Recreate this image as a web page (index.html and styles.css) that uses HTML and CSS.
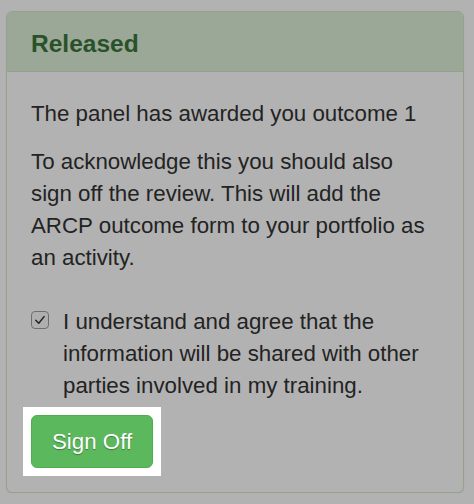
FILE: index.html
```html
<!DOCTYPE html>
<html lang="en">
<head>
<meta charset="utf-8">
<title>Released</title>
<link rel="stylesheet" href="styles.css">
</head>
<body>
<div class="panel">
  <div class="panel-heading">
    <h3 class="panel-title">Released</h3>
  </div>
  <div class="panel-body">
    <p class="para">The panel has awarded you outcome 1</p>
    <p class="para">To acknowledge this you should also sign off the review. This will add the ARCP outcome form to your portfolio as an activity.</p>
    <label class="checkbox">
      <span class="box"><svg class="tick" viewBox="0 0 18 18" width="16" height="16"><path d="M4.2 9.2 L7.6 12.6 L13.6 5.2" fill="none" stroke="#333" stroke-width="1.7" stroke-linecap="round" stroke-linejoin="round"/></svg></span>
      <span class="label-text">I understand and agree that the information will be shared with other parties involved in my training.</span>
    </label>
    <div class="actions">
      <div class="highlight">
        <button class="btn-success" type="button">Sign Off</button>
      </div>
    </div>
  </div>
</div>
<div class="overlay"></div>
</body>
</html>
```

FILE: styles.css
```css
html, body {
  margin: 0;
  padding: 0;
  background: #ffffff;
}

body {
  font-family: "Liberation Sans", Arial, Helvetica, sans-serif;
  color: #333333;
  font-size: 22.3px;
  line-height: 32px;
}

.panel {
  box-sizing: border-box;
  width: 458px;
  margin: 11px 0 0 6px;
  border: 1px solid #d6e9c6;
  border-radius: 6px;
  background: #ffffff;
  box-shadow: 0 1px 1px rgba(0, 0, 0, 0.08);
}

.panel-heading {
  background: #dff0d8;
  border-bottom: 1px solid #d6e9c6;
  border-radius: 5px 5px 0 0;
  padding: 18px 24px 14px;
}

.panel-title {
  margin: 0;
  font-size: 24.5px;
  line-height: 27px;
  font-weight: bold;
  color: #3c763d;
}

.panel-body {
  padding: 26px 26px 16px 24px;
}

.para {
  margin: 0 0 16px;
}

.checkbox {
  display: flex;
  align-items: flex-start;
  padding-top: 16px;
}

.box {
  flex: none;
  box-sizing: border-box;
  width: 18px;
  height: 18px;
  margin-top: 5px;
  margin-right: 14px;
  border: 1px solid #a0a0a0;
  border-radius: 4px;
  background: #fbfbfb;
  display: flex;
  align-items: center;
  justify-content: center;
}

.tick {
  display: block;
}

.actions {
  display: flex;
  margin-top: 5px;
}

.highlight {
  position: relative;
  z-index: 10;
  background: #ffffff;
  padding: 8px;
  margin-left: -8px;
}

.btn-success {
  display: block;
  margin: 0;
  font-family: "Liberation Sans", Arial, Helvetica, sans-serif;
  font-size: 22.3px;
  line-height: 31px;
  padding: 10px 20px;
  color: #ffffff;
  background: #5cb85c;
  border: 1px solid #4cae4c;
  border-radius: 6px;
  text-shadow: 0 1px 1px rgba(0, 0, 0, 0.35);
  cursor: pointer;
}

.overlay {
  position: fixed;
  left: 0;
  top: 0;
  right: 0;
  bottom: 0;
  background: rgba(0, 0, 0, 0.3);
  z-index: 5;
}
```
